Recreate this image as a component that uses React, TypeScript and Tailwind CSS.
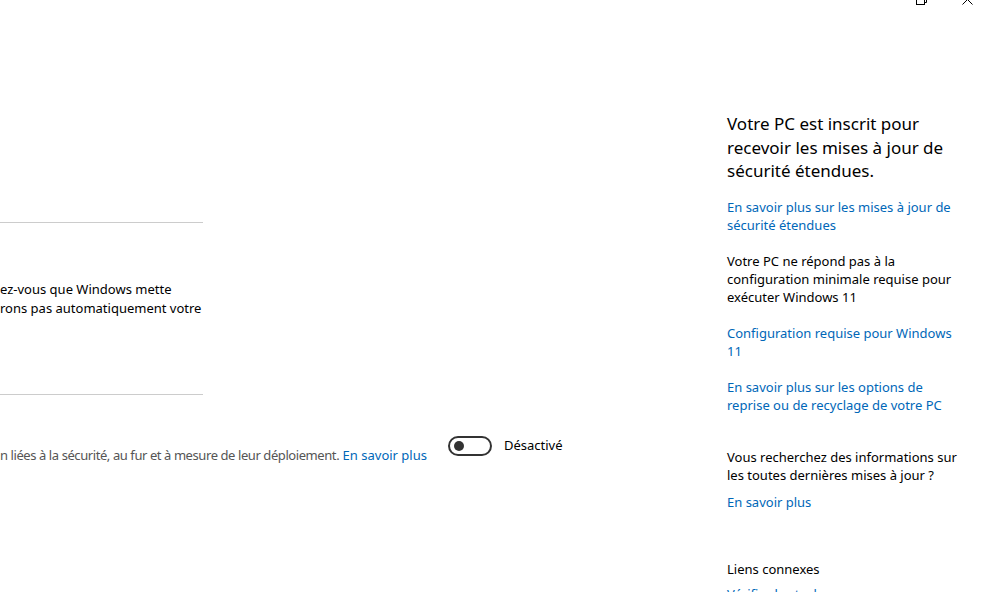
import { memo } from "react";

const TitleButtons = () => (
  <div className="absolute right-0 top-0 flex h-[6px] overflow-hidden">
    <div className="flex w-[56px] justify-center">
      <svg width="11" height="11" viewBox="0 0 11 11" className="-mt-[6px]" fill="none" stroke="#000" strokeWidth="1">
        <rect x="0.5" y="2.5" width="8" height="8" />
        <path d="M2.5 2.5V0.5H10.5V8.5H8.5" />
      </svg>
    </div>
    <div className="flex w-[36px] justify-center">
      <svg width="11" height="11" viewBox="0 0 11 11" className="-mt-[6px]" fill="none" stroke="#000" strokeWidth="1">
        <path d="M0.5 0.5L10.5 10.5M10.5 0.5L0.5 10.5" />
      </svg>
    </div>
  </div>
);

const Toggle = () => (
  <div className="flex h-[20px] w-[44px] items-center rounded-full border-2 border-[#333] pl-[4px]">
    <div className="h-[10px] w-[10px] rounded-full bg-[#333]" />
  </div>
);

const Link = ({ children, className = "" }: { children: React.ReactNode; className?: string }) => (
  <a className={`block text-[#0067b8] ${className}`}>{children}</a>
);

const App = () => {
  return (
    <div className="relative flex h-[592px] w-[985px] overflow-hidden bg-white font-['Segoe_UI','Noto_Sans',sans-serif] text-[13px] text-black">
      <TitleButtons />

      <div className="flex w-[727px] shrink-0 flex-col pt-[222px]">
        <div className="h-px w-[203px] bg-[#cccccc]" />
        <p className="mt-[57px] w-[203px] whitespace-nowrap leading-[19px]">
          ez-vous que Windows mette
          <br />
          rons pas automatiquement votre
        </p>
        <div className="mt-[76px] h-px w-[203px] bg-[#cccccc]" />
        <div className="mt-[41px] flex items-start">
          <p className="mt-[10px] whitespace-nowrap leading-[19px] text-[#555]">
            <span className="tracking-[-0.42px]">
              n liées à la sécurité, au fur et à mesure de leur déploiement.
            </span>{" "}
            <a className="text-[#0067b8]">En savoir plus</a>
          </p>
          <div className="ml-[21px]">
            <Toggle />
          </div>
          <span className="ml-[12px] leading-[19px]">Désactivé</span>
        </div>
      </div>

      <div className="flex w-[258px] flex-col whitespace-nowrap pt-[112px] leading-[18px]">
        <h2 className="text-[17px] leading-[23.5px]">
          Votre PC est inscrit pour
          <br />
          recevoir les mises à jour de
          <br />
          sécurité étendues.
        </h2>
        <Link className="mt-[15.5px]">
          En savoir plus sur les mises à jour de
          <br />
          sécurité étendues
        </Link>
        <p className="mt-[18px]">
          Votre PC ne répond pas à la
          <br />
          configuration minimale requise pour
          <br />
          exécuter Windows 11
        </p>
        <Link className="mt-[18px]">
          Configuration requise pour Windows
          <br />
          11
        </Link>
        <Link className="mt-[18px]">
          En savoir plus sur les options de
          <br />
          reprise ou de recyclage de votre PC
        </Link>
        <p className="mt-[34px]">
          Vous recherchez des informations sur
          <br />
          les toutes dernières mises à jour ?
        </p>
        <Link className="mt-[9px]">En savoir plus</Link>
        <p className="mt-[49px]">Liens connexes</p>
        <Link className="mt-[7px]">Vérifier le stockage</Link>
      </div>
    </div>
  );
};

export default memo(App);
